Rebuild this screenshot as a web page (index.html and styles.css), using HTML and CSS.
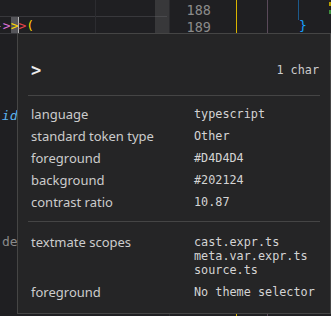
FILE: index.html
```html
<!DOCTYPE html>
<html lang="en">
<head>
  <meta charset="UTF-8">
  <meta name="viewport" content="width=device-width, initial-scale=1.0">
  <title>Inspect Editor Tokens</title>
  <link rel="stylesheet" href="styles.css">
</head>
<body>
  <div class="screen">
    <div class="editor">
      <!-- left editor group -->
      <div class="pane pane-left">
        <div class="line"></div>
        <div class="line current">
          <span class="code-text"><span class="c-dash">-</span><span class="c-orchid">&gt;</span><span class="c-gold hl">&gt;</span><span class="cursor"></span><span class="c-red">&gt;</span><span class="c-gold">(</span></span>
        </div>
        <div class="line line-id"><span class="c-redmark">(</span><span class="c-ident">id</span></div>
        <div class="line line-de"><span class="c-plain">de</span></div>
        <div class="indent-guide"></div>
        <div class="slider"></div>
      </div>

      <!-- right editor group -->
      <div class="pane pane-right">
        <div class="gutter">
          <div class="ln">188</div>
          <div class="ln">189</div>
        </div>
        <div class="code-right">
          <div class="line"></div>
          <div class="line"><span class="c-brace">}</span></div>
          <div class="guide guide-gold"></div>
          <div class="guide guide-orchid"></div>
          <div class="guide guide-blue"></div>
        </div>
        <div class="ruler">
          <span class="mark mark-yellow"></span>
          <span class="mark mark-green"></span>
        </div>
      </div>
    </div>

    <!-- inspect tokens hover -->
    <div class="hover">
      <div class="hover-head">
        <span class="token">&gt;</span>
        <span class="token-len">1 char</span>
      </div>
      <hr class="sep">
      <div class="props">
        <div class="prop-label">language</div>
        <div class="prop-value">typescript</div>
        <div class="prop-label">standard token type</div>
        <div class="prop-value">Other</div>
        <div class="prop-label">foreground</div>
        <div class="prop-value">#D4D4D4</div>
        <div class="prop-label">background</div>
        <div class="prop-value">#202124</div>
        <div class="prop-label">contrast ratio</div>
        <div class="prop-value">10.87</div>
      </div>
      <hr class="sep sep-2">
      <div class="props props-scopes">
        <div class="prop-label">textmate scopes</div>
        <div class="prop-value">cast.expr.ts<br>meta.var.expr.ts<br>source.ts</div>
        <div class="prop-label">foreground</div>
        <div class="prop-value">No theme selector</div>
      </div>
    </div>
  </div>
</body>
</html>
```

FILE: styles.css
```css
body {
  margin: 0;
  background: #1f1f22;
}

.screen {
  position: relative;
  width: 331px;
  height: 316px;
  overflow: hidden;
  background: #1f1f22;
}

.editor {
  display: flex;
  height: 100%;
}

.pane {
  position: relative;
  height: 100%;
}

.pane-left {
  width: 170px;
  border-right: 1px solid #2b2b2e;
  box-sizing: border-box;
}

.pane-right {
  flex: 1;
  display: flex;
}

.line {
  height: 16px;
  font-family: "DejaVu Sans Mono", monospace;
  font-size: 13px;
  line-height: 17px;
  white-space: nowrap;
}

.current {
  height: 16px;
  width: 167px;
  border-top: 1px solid #38383c;
  border-bottom: 1px solid #38383c;
  overflow: hidden;
}

.code-text {
  display: inline-flex;
  margin-left: -5px;
}

.c-dash { color: #8f7fe0; }
.c-orchid { color: #da70d6; }
.c-gold { color: #ffd700; }
.c-red { color: #e8444a; margin-left: -1px; }

.hl {
  background: #55555a;
}

.cursor {
  width: 1px;
  background: #b8b8b8;
}

.line-id {
  margin-top: 73px;
  margin-left: -6px;
}

.c-redmark { color: #e8444a; }

.c-ident {
  color: #5cb3f0;
  font-style: italic;
}

.line-de {
  margin-top: 110px;
  margin-left: 2px;
}

.c-plain { color: #8a8a8a; }

.indent-guide {
  position: absolute;
  left: 95px;
  top: 0;
  width: 1px;
  height: 33px;
  background: #2c2c30;
}

.slider {
  position: absolute;
  left: 155px;
  top: 0;
  width: 14px;
  height: 33px;
  background: rgba(121, 121, 121, 0.28);
}

.gutter {
  width: 41px;
  text-align: right;
  font-family: "DejaVu Sans Mono", monospace;
  font-size: 13.5px;
  color: #8b8b8b;
  padding-top: 2px;
}

.ln {
  height: 17px;
  line-height: 17px;
}

.code-right {
  position: relative;
  flex: 1;
}

.code-right .line:nth-child(2) {
  padding-left: 88px;
  padding-top: 1px;
}

.c-brace { color: #179fff; }

.guide {
  position: absolute;
  top: 0;
  width: 1px;
}

.guide-gold {
  left: 25px;
  height: 316px;
  background: #d9b400;
}

.guide-orchid {
  left: 56px;
  height: 316px;
  background: #5a4a5a;
}

.guide-blue {
  left: 87px;
  height: 20px;
  background: #1c5a8c;
}

.ruler {
  width: 2px;
  display: flex;
  flex-direction: column;
}

.mark {
  display: block;
  height: 4px;
}

.mark-yellow { background: #b8a000; margin-top: 2px; }
.mark-green { background: #3f8f3f; margin-top: 4px; }

/* hover widget */
.hover {
  position: absolute;
  left: 17px;
  top: 33px;
  width: 292px;
  height: 254px;
  padding: 25px 10px 0 10px;
  background: #252526;
  border: 1px solid #454545;
  color: #cccccc;
}

.hover-head {
  display: flex;
  justify-content: space-between;
  align-items: center;
  height: 22px;
  padding: 0 1px 0 3px;
}

.token {
  font-family: "DejaVu Sans Mono", monospace;
  font-weight: bold;
  font-size: 17px;
  color: #ececec;
}

.token-len {
  font-family: "DejaVu Sans Mono", monospace;
  font-size: 11.8px;
}

.sep {
  margin: 14px 0 7px 0;
  border: 0;
  border-top: 1px solid #454545;
}

.sep-2 {
  margin: 8px 0 9px 0;
}

.props {
  display: grid;
  grid-template-columns: 163px 1fr;
  padding-left: 3px;
}

.prop-label,
.prop-value {
  padding: 4px 0;
  line-height: 14px;
}

.prop-label {
  font-family: "Noto Sans", sans-serif;
  font-size: 13px;
  color: #cccccc;
}

.prop-value {
  font-family: "DejaVu Sans Mono", monospace;
  font-size: 11.8px;
  color: #d4d4d4;
}
```
